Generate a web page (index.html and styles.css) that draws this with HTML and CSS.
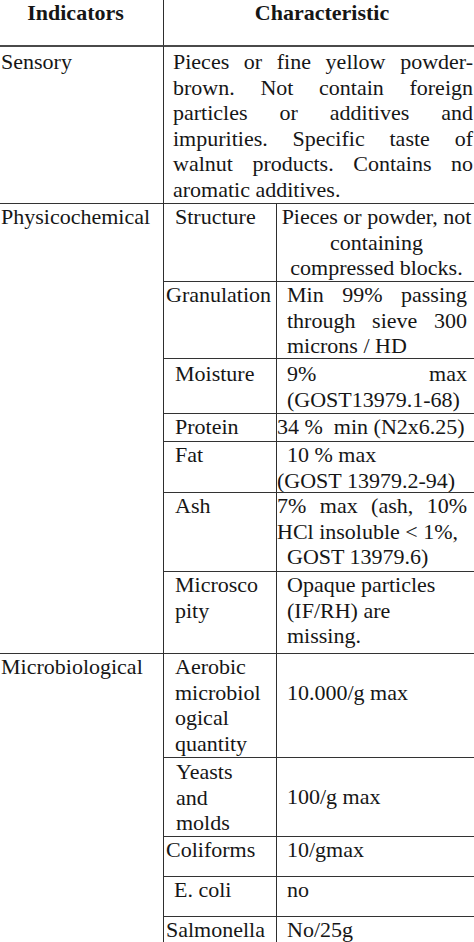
FILE: index.html
```html
<!DOCTYPE html>
<html lang="en">
<head>
<meta charset="utf-8">
<title>Indicators</title>
<link rel="stylesheet" href="styles.css">
</head>
<body>
<div class="sheet">
  <div class="c hd hd-ind">Indicators</div>
  <div class="c hd hd-char vl span23">Characteristic</div>

  <div class="c k top2 pt2">Sensory</div>
  <div class="c sens vl top2 pt2 span23">
    <span class="j">Pieces or fine yellow powder-</span>
    <span class="j">brown. Not contain foreign</span>
    <span class="j">particles or additives and</span>
    <span class="j">impurities. Specific taste of</span>
    <span class="j">walnut products. Contains no</span>
    <span class="ln">aromatic additives.</span>
  </div>

  <div class="c k top1 phys">Physicochemical</div>
  <div class="c p vl top1">Structure</div>
  <div class="c v vl top1 ctr">Pieces or powder, not<br>containing<br>compressed blocks.</div>

  <div class="c p vl top1 p-tight">Granulation</div>
  <div class="c v vl top1">
    <span class="j">Min 99% passing</span>
    <span class="j">through sieve 300</span>
    <span class="ln">microns / HD</span>
  </div>

  <div class="c p vl top1 pt2">Moisture</div>
  <div class="c v vl top1 pt2">
    <span class="j">9% max</span>
    <span class="ln">(GOST13979.1-68)</span>
  </div>

  <div class="c p vl top1">Protein</div>
  <div class="c v vl top1 v-flush">34 %&nbsp; min (N2x6.25)</div>

  <div class="c p vl top1">Fat</div>
  <div class="c v vl top1">
    <span class="ln">10 % max</span>
    <span class="ln out">(GOST 13979.2-94)</span>
  </div>

  <div class="c p vl top1">Ash</div>
  <div class="c v vl top1 v-flush">
    <span class="j">7% max (ash, 10%</span>
    <span class="ln">HCl insoluble &lt; 1%,</span>
    <span class="ln in">GOST 13979.6)</span>
  </div>

  <div class="c p vl top1">Microsco<br>pity</div>
  <div class="c v vl top1">Opaque particles<br>(IF/RH) are<br>missing.</div>

  <div class="c k top1 micro">Microbiological</div>
  <div class="c p vl top1">Aerobic<br>microbiol<br>ogical<br>quantity</div>
  <div class="c v vl top1 drop">10.000/g max</div>

  <div class="c p vl top1 pt1 p-yeast">Yeasts<br>and<br>molds</div>
  <div class="c v vl top1 drop">100/g max</div>

  <div class="c p vl top1 p-tight">Coliforms</div>
  <div class="c v vl top1">10/gmax</div>

  <div class="c p vl top1 p-ecoli">E. coli</div>
  <div class="c v vl top1">no</div>

  <div class="c p vl top1 p-tight">Salmonella</div>
  <div class="c v vl top1">No/25g</div>
</div>
</body>
</html>
```

FILE: styles.css
```css
html, body {
  margin: 0;
  padding: 0;
  background: #ffffff;
}

body {
  overflow: hidden;
  font-family: "Liberation Serif", "Times New Roman", serif;
  font-size: 22px;
  line-height: 25.5px;
  color: #161616;
}

.sheet {
  display: grid;
  grid-template-columns: 163px 113px 198px;
  grid-template-rows: 45px 158px 78px 77px 55px 28px 51px 79px 82px 104px 79px 40px 40px 40px;
  width: 474px;
}

.c {
  box-sizing: border-box;
  padding: 0;
  min-width: 0;
}

.span23 {
  grid-column: 2 / 4;
}

.vl {
  border-left: 1px solid #2e2e2e;
}

.top1 {
  border-top: 1px solid #333333;
}

.top2 {
  border-top: 2px solid #4a4a4a;
}

.pt1 {
  padding-top: 1px;
}

.pt2 {
  padding-top: 2px;
}

/* header */
.hd {
  font-weight: bold;
  line-height: 25px;
  text-align: center;
}

.hd-ind {
  padding-right: 12px;
}

.hd-char {
  padding-left: 6px;
}

/* first column (indicator names) */
.k {
  padding-left: 1px;
}

.phys {
  grid-row: span 7;
}

.micro {
  grid-row: span 5;
}

/* sensory description */
.sens {
  padding-left: 9px;
  padding-right: 1px;
}

/* second column (parameters) */
.p {
  padding-left: 11px;
}

.p-tight {
  padding-left: 2px;
}

.p-ecoli {
  padding-left: 10px;
}

.p-yeast {
  padding-left: 12px;
}

/* third column (values) */
.v {
  padding-left: 10px;
  padding-right: 7px;
}

.v-flush {
  padding-left: 0;
}

.ctr {
  padding-left: 2px;
  padding-right: 0;
  text-align: center;
}

.drop {
  padding-top: 26px;
}

.j {
  display: block;
  text-align: justify;
  text-align-last: justify;
}

.ln {
  display: block;
}

.out {
  margin-left: -10px;
}

.in {
  padding-left: 10px;
}
```
